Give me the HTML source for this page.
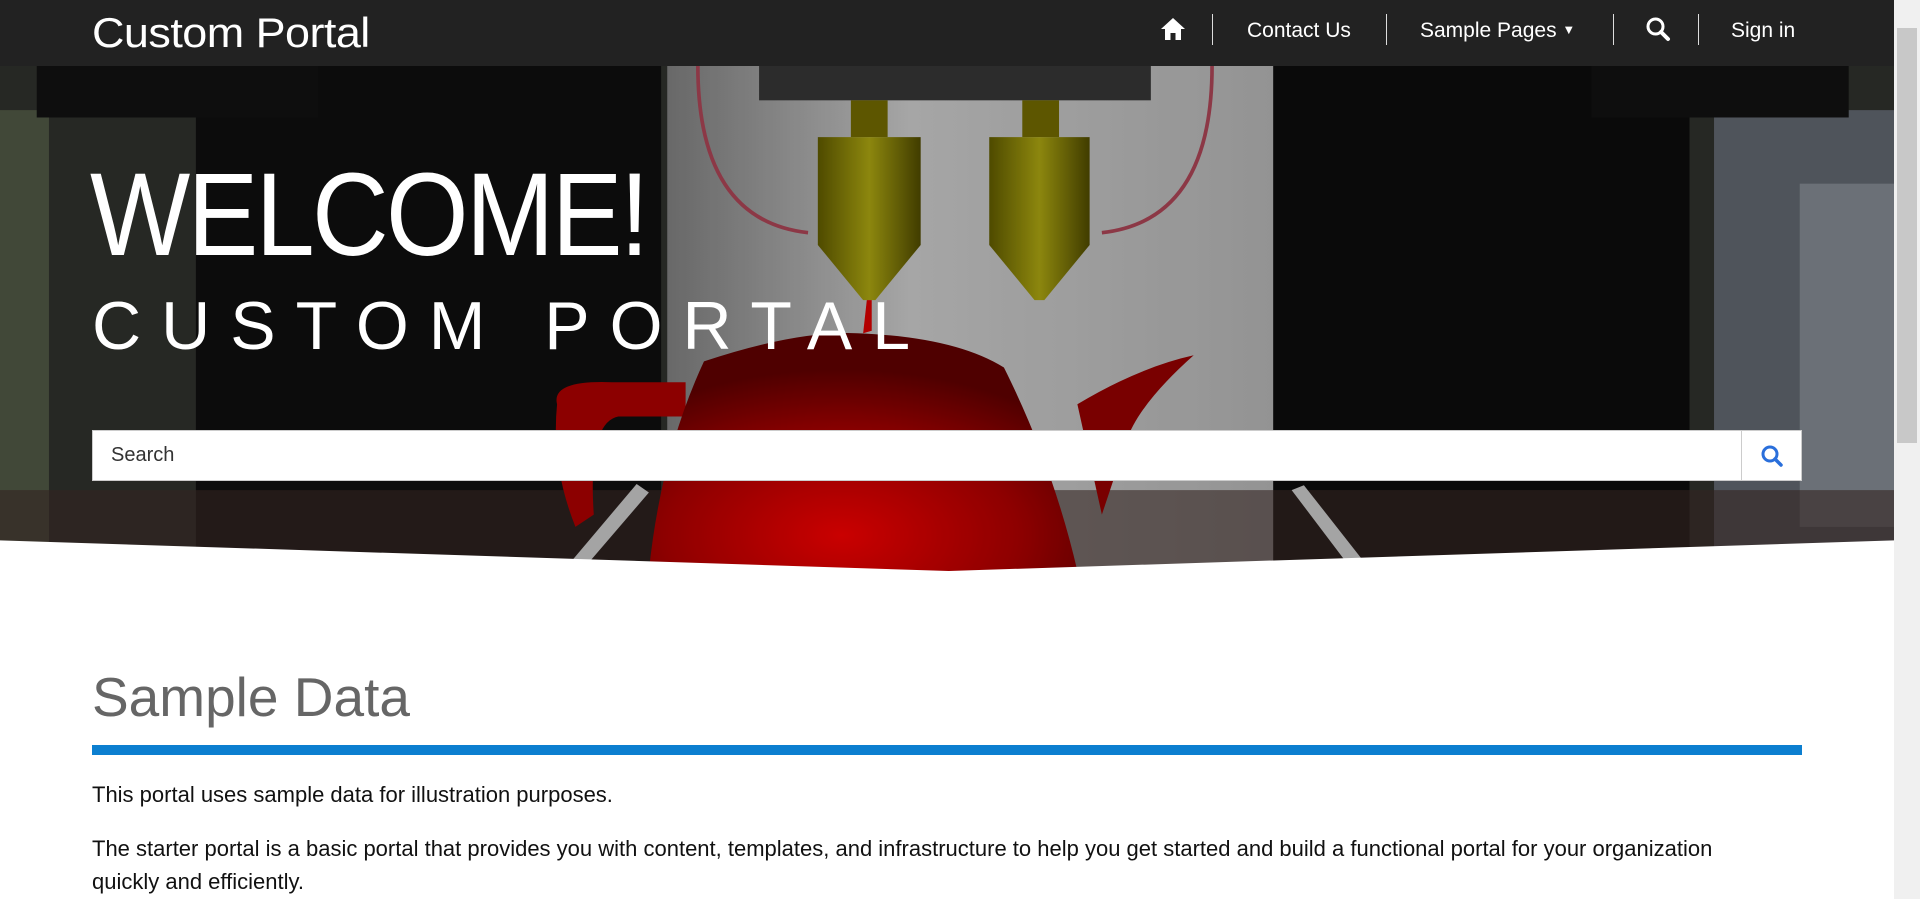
<!DOCTYPE html>
<html><head><meta charset="utf-8"><style>
*{margin:0;padding:0;box-sizing:border-box}
html,body{width:1920px;height:899px;overflow:hidden;background:#fff;font-family:"Liberation Sans",sans-serif}
.nav{position:absolute;left:0;top:0;width:1894px;height:66px;background:#222}
.brand{position:absolute;left:92px;top:9px;color:#fff;font-size:42px;font-weight:300;letter-spacing:-0.5px;transform:scaleX(1.07);transform-origin:left}
.ni{position:absolute;top:19px;color:#fff;font-size:21px}
.sep{position:absolute;top:14px;width:1px;height:31px;background:#ddd}
.hero{position:absolute;left:0;top:66px;width:1894px;height:505px;overflow:hidden}
.h1{position:absolute;left:90px;top:90px;color:#fff;font-size:118px;font-weight:300;letter-spacing:-3px;line-height:1;transform:scaleX(0.9);transform-origin:left}
.h2{position:absolute;left:92px;top:226px;color:#fff;font-size:68px;font-weight:300;letter-spacing:20px;line-height:1}
.search{position:absolute;left:92px;top:364px;width:1710px;height:51px;background:#fff;border:1px solid #ccc}
.search span{position:absolute;left:18px;top:13px;font-size:20px;color:#333}
.search .b{position:absolute;right:0;top:0;width:60px;height:49px;border-left:1px solid #ccc}
.sb{position:absolute;left:1894px;top:0;width:26px;height:899px;background:#f0f0f0}
h2{position:absolute;left:92px;top:664px;font-size:55px;font-weight:300;color:#666;line-height:1.2}
.bar{position:absolute;left:92px;top:745px;width:1710px;height:10px;background:#0c7fd0}
p{position:absolute;left:92px;width:1680px;font-size:22px;color:#111;line-height:33px}
</style></head><body>
<div class="nav">
<div class="brand">Custom Portal</div>
<svg style="position:absolute;left:1160px;top:16px" width="26" height="26" viewBox="0 0 26 26"><path d="M13 2 L25 13 L21 13 L21 24 L15.5 24 L15.5 17 L10.5 17 L10.5 24 L5 24 L5 13 L1 13 Z" fill="#fff"/></svg>
<div class="sep" style="left:1212px"></div>
<div class="ni" style="left:1247px">Contact Us</div>
<div class="sep" style="left:1386px"></div>
<div class="ni" style="left:1420px">Sample Pages <span style="font-size:13px;position:relative;top:-3px">▼</span></div>
<div class="sep" style="left:1613px"></div>
<svg style="position:absolute;left:1645px;top:16px" width="26" height="26" viewBox="0 0 26 26"><circle cx="10.5" cy="10.5" r="7.5" fill="none" stroke="#fff" stroke-width="3"/><path d="M16 16 L23 23" stroke="#fff" stroke-width="4" stroke-linecap="round"/></svg>
<div class="sep" style="left:1698px"></div>
<div class="ni" style="left:1731px">Sign in</div>
</div>
<div class="hero">
<svg width="1894" height="505" viewBox="0 54 1547 412" preserveAspectRatio="none" style="position:absolute;left:0;top:0">
<defs>
<radialGradient id="tp" cx="0.45" cy="0.85" r="0.7"><stop offset="0" stop-color="#e60000"/><stop offset="0.6" stop-color="#a00000"/><stop offset="1" stop-color="#5a0000"/></radialGradient>
<linearGradient id="cl" x1="0" x2="1"><stop offset="0" stop-color="#777"/><stop offset="0.4" stop-color="#bdbdbd"/><stop offset="1" stop-color="#a8a8a8"/></linearGradient>
<linearGradient id="nz" x1="0" x2="1"><stop offset="0" stop-color="#5a5500"/><stop offset="0.5" stop-color="#a09a10"/><stop offset="1" stop-color="#4a4500"/></linearGradient>
</defs>
<rect x="0" y="54" width="1547" height="412" fill="#2c2e2a"/>
<rect x="0" y="90" width="40" height="376" fill="#4a5240"/>
<rect x="1400" y="90" width="147" height="376" fill="#5a6068"/>
<rect x="1470" y="150" width="77" height="280" fill="#7a8088"/>
<rect x="545" y="54" width="495" height="412" fill="url(#cl)"/>
<rect x="160" y="54" width="380" height="412" fill="#0e0e0e"/>
<rect x="1040" y="54" width="340" height="412" fill="#0c0c0c"/>
<rect x="30" y="54" width="230" height="42" fill="#111"/>
<rect x="1300" y="54" width="210" height="42" fill="#111"/>
<rect x="620" y="54" width="320" height="28" fill="#333"/>
<rect x="0" y="400" width="1547" height="66" fill="#3a2a26" opacity="0.6"/>
<path d="M570 54 Q570 180 660 190" stroke="#a04050" stroke-width="3" fill="none"/>
<path d="M990 54 Q990 180 900 190" stroke="#a04050" stroke-width="3" fill="none"/>
<rect x="695" y="82" width="30" height="30" fill="#6a6200"/>
<rect x="835" y="82" width="30" height="30" fill="#6a6200"/>
<path d="M668 112 L752 112 L752 200 L715 245 L705 245 L668 200 Z" fill="url(#nz)"/>
<path d="M808 112 L890 112 L890 200 L853 245 L845 245 L808 200 Z" fill="url(#nz)"/>
<path d="M708 245 L712 245 L712 270 L705 272 Z" fill="#c00"/>
<path d="M455 330 Q450 310 500 312 L560 312 L560 340 L505 340 Q480 345 485 420 L470 430 Q450 380 455 330 Z" fill="#a00000"/>
<path d="M880 330 Q930 300 975 290 Q930 330 920 360 L900 420 Z" fill="#8a0000"/>
<path d="M575 295 Q650 270 700 272 Q780 275 820 300 Q860 380 880 466 L530 466 Q540 370 575 295 Z" fill="url(#tp)"/>
<path d="M460 466 L520 395 L530 402 L475 466 Z" fill="#bbb"/>
<path d="M1055 400 L1065 396 L1120 466 L1105 466 Z" fill="#bbb"/>
<rect x="0" y="54" width="1547" height="412" fill="#000" opacity="0.12"/>
<path d="M0 441 L775 466 L1547 441 L1547 470 L0 470 Z" fill="#fff"/>
</svg>
<div class="h1">WELCOME!</div>
<div class="h2">CUSTOM PORTAL</div>
<div class="search"><span>Search</span><div class="b"><svg style="position:absolute;left:18px;top:13px" width="24" height="24" viewBox="0 0 24 24"><circle cx="10" cy="10" r="7" fill="none" stroke="#2a6fdb" stroke-width="3"/><path d="M15 15 L21 21" stroke="#2a6fdb" stroke-width="3.5" stroke-linecap="round"/></svg></div></div>
</div>
<h2>Sample Data</h2>
<div class="bar"></div>
<p style="top:778px">This portal uses sample data for illustration purposes.</p>
<p style="top:832px">The starter portal is a basic portal that provides you with content, templates, and infrastructure to help you get started and build a functional portal for your organization quickly and efficiently.</p>
<div class="sb"><div style="position:absolute;left:3px;top:28px;width:20px;height:415px;background:#c8c8c8"></div></div>
</body></html>
